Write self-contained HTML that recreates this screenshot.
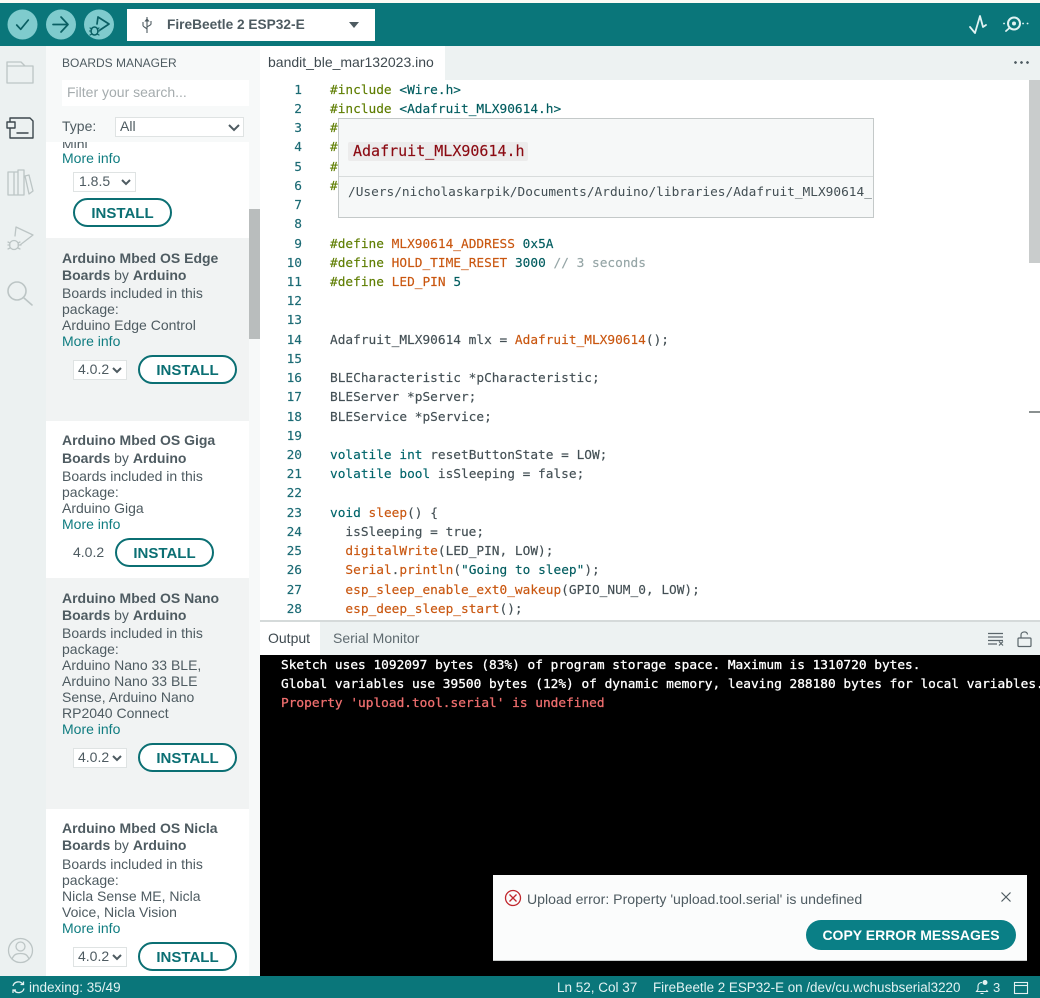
<!DOCTYPE html>
<html><head><meta charset="utf-8"><style>
*{box-sizing:border-box}
html,body{margin:0;padding:0;width:1040px;height:998px;overflow:hidden;background:#fff;font-family:"Liberation Sans",sans-serif}
.a{position:absolute;white-space:nowrap}
#code div,#nums div{position:absolute;white-space:pre;height:19px;line-height:19px}
#code,#nums{font:12.8px "DejaVu Sans Mono",monospace;-webkit-text-stroke:.15px}
#code{color:#434f54}
#nums div{color:#1b6a74;text-align:right;width:40px;left:262px}
#code div{left:330px}
.k{color:#5e7d00}.o{color:#c9560f}.t{color:#00656b}.c{color:#95a5a6}.s{color:#005c5f}
.b{font-weight:bold;color:#4e5b61}
.t14{font-size:14px;color:#4e5b61;line-height:16px;left:62px}
.m{color:#0f7c80}
.btn{position:absolute;height:29px;border:2px solid #0b6f73;border-radius:15px;background:#fff;color:#0b6f73;font:bold 15px/27px "Liberation Sans",sans-serif;text-align:center}
.sel{position:absolute;height:20px;background:#fff;border:1px solid #dfe3e3;font-size:14px;line-height:17px;color:#4e5b61;padding-left:4px}
.sel svg{position:absolute;right:3px;top:6px}
.con{left:281px;font:12.8px/19px "DejaVu Sans Mono",monospace;color:#fff;-webkit-text-stroke:.3px}
</style></head><body>
<div class="a" style="left:0;top:0;width:1040px;height:3px;background:#fbfaf4"></div>
<div class="a" style="left:0;top:3px;width:1040px;height:43px;background:#0a767a"></div>
<div class="a" style="left:0;top:46px;width:46px;height:930px;background:#ecf1f1"></div>
<div class="a" style="left:46px;top:46px;width:214px;height:930px;background:#f7f9f9"></div>
<div class="a" style="left:260px;top:46px;width:780px;height:34px;background:#edf2f2"></div>
<div class="a" style="left:260px;top:46px;width:185px;height:34px;background:#fff"></div>

<svg class="a" style="left:0;top:0" width="130" height="46" fill="none" stroke="#0a5f63" stroke-width="1.7" stroke-linecap="round" stroke-linejoin="round">
<circle cx="22.5" cy="24.5" r="15" fill="#7fcbcd" stroke="none"/>
<circle cx="61" cy="24.5" r="15" fill="#7fcbcd" stroke="none"/>
<circle cx="99" cy="24.5" r="15" fill="#7fcbcd" stroke="none"/>
<path d="M16.7 25l4 4.3 7.6-9.3"/>
<path d="M53 24.5h15M61 17l7 7.5-7 7.500"/>
<path d="M98 17l11 7-9 6M98 17l-1 7"/>
<ellipse cx="94.5" cy="31" rx="3.5" ry="4" stroke-width="1.5"/>
<path d="M90 28l2 1M99 28l-2 1M89.5 31h2M97.5 31h2M90 35l2-1M99 35l-2-1" stroke-width="1.1"/>
</svg>
<div class="a" style="left:127px;top:9px;width:248px;height:32px;background:#fff"></div>
<svg class="a" style="left:140px;top:16px" width="16" height="18" fill="none" stroke="#4e5b61" stroke-width="1.1"><path d="M7 1v16M7 3L5.5 5h3zM3 6v3.500c0 1.500 4 2.500 4 4M11 5v3c0 1.500-4 2-4 3.500"/></svg>
<div class="a" style="left:167px;top:16px;font:bold 13.7px/18px 'Liberation Sans',sans-serif;color:#4e5b61">FireBeetle 2 ESP32-E</div>
<svg class="a" style="left:349px;top:22px" width="10" height="6"><path d="M0 0h10L5 6z" fill="#4e5b61"/></svg>

<svg class="a" style="left:965px;top:10px" width="70" height="30" fill="none" stroke="#e0f2f2" stroke-width="1.8" stroke-linecap="round" stroke-linejoin="round">
<path d="M5 17l5 6 5-17 3 11 3-2"/>
<circle cx="49" cy="13.5" r="6" stroke-width="2"/><circle cx="49" cy="13.5" r="2" fill="#e0f2f2" stroke="none"/>
<path d="M44.5 18l-3.500 3M39 13.500h.1M58 13.500h.1M62.500 13.500h.1" stroke-width="1.8"/>
</svg>

<!-- side icons -->
<svg class="a" style="left:0;top:46px" width="46" height="930" fill="none" stroke="#bcc5c5" stroke-width="1.3" stroke-linejoin="round" stroke-linecap="round">
<path d="M7 16h14l4 4h8v17H7zM7 20h18"/>
<path d="M10 76v-4h20l3 3v17H10V82M7 76h8v6H7zM17 87h11" stroke="#3c474d" stroke-width="1.4"/>
<path d="M8 126h6v23H8zM14 126h4v23h-4zM18 124h6v25h-6zM25 130l4-1 4 16-4 3z"/>
<path d="M16 181l17 8-13 10M16 181l-1 9"/>
<ellipse cx="14" cy="199" rx="4.5" ry="4.5"/>
<path d="M8 196l2 1M20 196l-2 1M8 199h2M18 199h3M8 203l2-1M20 203l-2-1"/>
<circle cx="17" cy="245" r="9" stroke-width="1.6"/><path d="M24 252l8 7" stroke-width="1.6"/>
<circle cx="20.5" cy="904.5" r="12"/><circle cx="20.5" cy="900.5" r="4.5"/><path d="M12 913c2-5 5-5.5 8.5-5.5s6.500.5 8.500 5.500"/>
</svg>

<!-- board list -->
<div class="a" style="left:46px;top:142px;width:203px;height:96px;background:#fff"></div>
<div class="a" style="left:46px;top:238px;width:203px;height:183px;background:#f1f3f3"></div>
<div class="a" style="left:46px;top:421px;width:203px;height:157px;background:#fff"></div>
<div class="a" style="left:46px;top:578px;width:203px;height:231px;background:#f1f3f3"></div>
<div class="a" style="left:46px;top:809px;width:203px;height:167px;background:#fff"></div>
<div class="a" style="left:249px;top:209px;width:11px;height:130px;background:#b9bdbd"></div>
<div class="a t14" style="top:136px;height:12px;overflow:hidden">Mini</div>
<div class="a" style="left:46px;top:46px;width:203px;height:96px;background:#f7f9f9"></div>
<div class="a" style="left:62px;top:56px;font-size:12px;line-height:14px;color:#4e5b61">BOARDS MANAGER</div>
<div class="a" style="left:62px;top:80px;width:187px;height:26px;background:#fff;font-size:14px;line-height:25px;color:#a5acae;padding-left:5px">Filter your search...</div>
<div class="a" style="left:62px;top:118px;font-size:14px;line-height:16px;color:#4e5b61">Type:</div>
<div class="a sel" style="left:115px;top:117px;width:129px">All<svg width="12" height="8" fill="none" stroke="#4e5b61" stroke-width="2"><path d="M1 1l5 5 5-5"/></svg></div>

<div class="a t14 m" style="top:150px">More info</div>
<div class="a sel" style="left:73px;top:172px;width:63px;padding-left:5px">1.8.5<svg width="12" height="8" fill="none" stroke="#4e5b61" stroke-width="2"><path d="M2 1l4 4 4-4"/></svg></div>
<div class="btn" style="left:73px;top:198px;width:99px">INSTALL</div>

<div class="a t14" style="top:250px"><b class="b">Arduino Mbed OS Edge</b></div>
<div class="a t14" style="top:267px"><b class="b">Boards</b> by <b class="b">Arduino</b></div>
<div class="a t14" style="top:285px">Boards included in this</div>
<div class="a t14" style="top:301px">package:</div>
<div class="a t14" style="top:317px">Arduino Edge Control</div>
<div class="a t14 m" style="top:333px">More info</div>
<div class="a sel" style="left:73px;top:360px;width:54px">4.0.2<svg width="12" height="8" fill="none" stroke="#4e5b61" stroke-width="2"><path d="M2 1l4 4 4-4"/></svg></div>
<div class="btn" style="left:138px;top:355px;width:99px">INSTALL</div>

<div class="a t14" style="top:432px"><b class="b">Arduino Mbed OS Giga</b></div>
<div class="a t14" style="top:450px"><b class="b">Boards</b> by <b class="b">Arduino</b></div>
<div class="a t14" style="top:468px">Boards included in this</div>
<div class="a t14" style="top:484px">package:</div>
<div class="a t14" style="top:500px">Arduino Giga</div>
<div class="a t14 m" style="top:516px">More info</div>
<div class="a t14" style="left:73px;top:544px">4.0.2</div>
<div class="btn" style="left:115px;top:538px;width:99px">INSTALL</div>

<div class="a t14" style="top:590px"><b class="b">Arduino Mbed OS Nano</b></div>
<div class="a t14" style="top:607px"><b class="b">Boards</b> by <b class="b">Arduino</b></div>
<div class="a t14" style="top:625px">Boards included in this</div>
<div class="a t14" style="top:641px">package:</div>
<div class="a t14" style="top:657px">Arduino Nano 33 BLE,</div>
<div class="a t14" style="top:673px">Arduino Nano 33 BLE</div>
<div class="a t14" style="top:689px">Sense, Arduino Nano</div>
<div class="a t14" style="top:705px">RP2040 Connect</div>
<div class="a t14 m" style="top:721px">More info</div>
<div class="a sel" style="left:73px;top:748px;width:54px">4.0.2<svg width="12" height="8" fill="none" stroke="#4e5b61" stroke-width="2"><path d="M2 1l4 4 4-4"/></svg></div>
<div class="btn" style="left:138px;top:743px;width:99px">INSTALL</div>

<div class="a t14" style="top:820px"><b class="b">Arduino Mbed OS Nicla</b></div>
<div class="a t14" style="top:837px"><b class="b">Boards</b> by <b class="b">Arduino</b></div>
<div class="a t14" style="top:856px">Boards included in this</div>
<div class="a t14" style="top:872px">package:</div>
<div class="a t14" style="top:888px">Nicla Sense ME, Nicla</div>
<div class="a t14" style="top:904px">Voice, Nicla Vision</div>
<div class="a t14 m" style="top:920px">More info</div>
<div class="a sel" style="left:73px;top:947px;width:54px">4.0.2<svg width="12" height="8" fill="none" stroke="#4e5b61" stroke-width="2"><path d="M2 1l4 4 4-4"/></svg></div>
<div class="btn" style="left:138px;top:942px;width:99px">INSTALL</div>

<!-- editor tabs -->
<div class="a" style="left:268px;top:54px;font-size:14px;line-height:17px;color:#3f4a50">bandit_ble_mar132023.ino</div>
<div class="a" style="left:1014px;top:61px;width:15px;height:3px;background:radial-gradient(circle at 1.5px 1.5px,#4e5b61 1.2px,transparent 1.5px) 0 0/6px 3px"></div>

<!-- editor -->
<div class="a" style="left:1029px;top:80px;width:11px;height:183px;background:#c9cccc"></div>
<div class="a" style="left:1029px;top:411px;width:11px;height:2px;background:#8a9090"></div>
<div id="nums">
<div style="top:81px">1</div><div style="top:100px">2</div><div style="top:119px">3</div><div style="top:138px">4</div><div style="top:158px">5</div><div style="top:177px">6</div><div style="top:196px">7</div><div style="top:215px">8</div><div style="top:235px">9</div><div style="top:254px">10</div><div style="top:273px">11</div><div style="top:292px">12</div><div style="top:311px">13</div><div style="top:331px">14</div><div style="top:350px">15</div><div style="top:369px">16</div><div style="top:388px">17</div><div style="top:408px">18</div><div style="top:427px">19</div><div style="top:446px">20</div><div style="top:465px">21</div><div style="top:484px">22</div><div style="top:504px">23</div><div style="top:523px">24</div><div style="top:542px">25</div><div style="top:561px">26</div><div style="top:581px">27</div><div style="top:600px">28</div>
</div>
<div id="code">
<div style="top:81px"><span class="k">#include</span> <span class="s">&lt;Wire.h&gt;</span></div>
<div style="top:100px"><span class="k">#include</span> <span class="s">&lt;Adafruit_MLX90614.h&gt;</span></div>
<div style="top:119px"><span class="k">#</span></div>
<div style="top:138px"><span class="k">#</span></div>
<div style="top:158px"><span class="k">#</span></div>
<div style="top:177px"><span class="k">#</span></div>
<div style="top:235px"><span class="k">#define</span> <span class="o">MLX90614_ADDRESS</span> <span class="s">0x5A</span></div>
<div style="top:254px"><span class="k">#define</span> <span class="o">HOLD_TIME_RESET</span> <span class="s">3000</span> <span class="c">// 3 seconds</span></div>
<div style="top:273px"><span class="k">#define</span> <span class="o">LED_PIN</span> <span class="s">5</span></div>
<div style="top:331px">Adafruit_MLX90614 mlx = <span class="o">Adafruit_MLX90614</span>();</div>
<div style="top:369px">BLECharacteristic *pCharacteristic;</div>
<div style="top:388px">BLEServer *pServer;</div>
<div style="top:408px">BLEService *pService;</div>
<div style="top:446px"><span class="t">volatile</span> <span class="t">int</span> resetButtonState = LOW;</div>
<div style="top:465px"><span class="t">volatile</span> <span class="t">bool</span> isSleeping = false;</div>
<div style="top:504px"><span class="t">void</span> <span class="o">sleep</span>() {</div>
<div style="top:523px">  isSleeping = true;</div>
<div style="top:542px">  <span class="o">digitalWrite</span>(LED_PIN, LOW);</div>
<div style="top:561px">  <span class="o">Serial</span>.<span class="o">println</span>(<span class="s">"Going to sleep"</span>);</div>
<div style="top:581px">  <span class="o">esp_sleep_enable_ext0_wakeup</span>(GPIO_NUM_0, LOW);</div>
<div style="top:600px">  <span class="o">esp_deep_sleep_start</span>();</div>
</div>

<!-- hover -->
<div class="a" style="left:338px;top:118px;width:536px;height:100px;background:#f6f8f8;border:1px solid #c4c9c9;overflow:hidden;font:12.8px 'DejaVu Sans Mono',monospace">
<div class="a" style="left:9px;top:23px;width:180px;height:19px;background:#ececec;border-radius:2px"></div>
<div class="a" style="left:14px;top:23px;font-size:15px;line-height:19px;color:#8b0a12;-webkit-text-stroke:.15px">Adafruit_MLX90614.h</div>
<div class="a" style="left:0;top:57px;width:536px;height:1px;background:#d8dcdc"></div>
<div class="a" style="left:9px;top:64px;line-height:19px;color:#434f54">/Users/nicholaskarpik/Documents/Arduino/libraries/Adafruit_MLX90614_</div>
</div>

<!-- output -->
<div class="a" style="left:260px;top:620px;width:780px;height:2px;background:#d5dada"></div>
<div class="a" style="left:260px;top:622px;width:780px;height:33px;background:#edf2f2"></div>
<div class="a" style="left:260px;top:622px;width:60px;height:33px;background:#fff"></div>
<div class="a" style="left:268px;top:630px;font-size:14px;line-height:17px;color:#3f4a50">Output</div>
<div class="a" style="left:333px;top:630px;font-size:14px;line-height:17px;color:#5f6b70">Serial Monitor</div>
<svg class="a" style="left:985px;top:630px" width="50" height="20" fill="none" stroke="#5b666b" stroke-width="1.2">
<path d="M3 3.5h15M3 7h15M3 10.5h15M3 14h9M14 11.5l4 4M18 11.5l-4 4"/>
<rect x="33" y="8" width="13" height="8.5" rx="1"/><path d="M36 8V5c0-4 6.5-4 6.5-.5"/>
</svg>
<div class="a" style="left:260px;top:655px;width:780px;height:321px;background:#000"></div>
<div class="a con" style="top:656px">Sketch uses 1092097 bytes (83%) of program storage space. Maximum is 1310720 bytes.</div>
<div class="a con" style="top:675px;width:759px;overflow:hidden">Global variables use 39500 bytes (12%) of dynamic memory, leaving 288180 bytes for local variables.</div>
<div class="a con" style="top:694px;color:#ee6e6e">Property 'upload.tool.serial' is undefined</div>

<!-- notification -->
<div class="a" style="left:493px;top:875px;width:534px;height:86px;background:#fbfcfc;border-bottom:1px solid #c9cccc"></div>
<svg class="a" style="left:503px;top:888px" width="20" height="20" fill="none" stroke="#c0272d" stroke-width="1.3"><circle cx="10" cy="10" r="7.5"/><path d="M6.5 6.5l7 7M13.5 6.5l-7 7"/></svg>
<div class="a" style="left:527px;top:891px;font-size:14.1px;line-height:17px;color:#4e5b61">Upload error: Property 'upload.tool.serial' is undefined</div>
<svg class="a" style="left:1000px;top:891px" width="12" height="12" stroke="#4e5b61" stroke-width="1.2"><path d="M1.5 1.5l9 9M10.5 1.5l-9 9"/></svg>
<div class="a" style="left:806px;top:920px;width:210px;height:30px;border-radius:15px;background:#0a7f86;color:#fff;font:bold 14px/31px 'Liberation Sans',sans-serif;text-align:center">COPY ERROR MESSAGES</div>

<!-- status -->
<div class="a" style="left:0;top:976px;width:1040px;height:22px;background:#0a767a"></div>
<svg class="a" style="left:11px;top:980px" width="15" height="15" fill="none" stroke="#e3f2f2" stroke-width="1.3"><path d="M2 6a5.5 5.5 0 0 1 10-1.5M13 8.5a5.5 5.5 0 0 1-10 1.5M12.5 1.5v3h-3M2 13v-3h3"/></svg>
<div class="a" style="left:29px;top:980px;font-size:13.5px;line-height:16px;color:#e3f2f2">indexing: 35/49</div>
<div class="a" style="left:557px;top:980px;font-size:13.5px;line-height:16px;color:#e3f2f2">Ln 52, Col 37</div>
<div class="a" style="left:653px;top:980px;font-size:13.4px;line-height:16px;color:#e3f2f2">FireBeetle 2 ESP32-E on /dev/cu.wchusbserial3220</div>
<svg class="a" style="left:974px;top:979px" width="60" height="17" fill="none" stroke="#e3f2f2" stroke-width="1.1"><path d="M8 3.5c-3 0-4 2-4 4v3l-1.5 2h11l-1-1.5M6.5 14.5h3"/><circle cx="11" cy="3.5" r="2.5" fill="#e3f2f2" stroke="none"/><rect x="40.5" y="3.5" width="13" height="11"/><path d="M40.5 6.5h13"/></svg>
<div class="a" style="left:993px;top:980px;font-size:13px;line-height:16px;color:#e3f2f2">3</div>
</body></html>
